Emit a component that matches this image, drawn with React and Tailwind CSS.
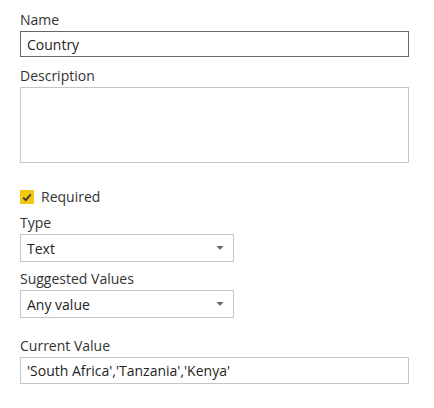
import React from "react";

function Caret() {
  return (
    <svg width="8" height="4" viewBox="0 0 8 4" className="block">
      <path d="M0.5 0 L7.5 0 L4 4 Z" fill="#6a6a6a" />
    </svg>
  );
}

export default function App() {
  return (
    <div className="w-[434px] h-[408px] bg-white pt-[10px] px-[20px] text-[14px] text-[#333333] flex flex-col font-['Open_Sans',sans-serif]">
      <div className="h-[20px] leading-[20px]">Name</div>
      <div className="mt-[1px] w-[389px] h-[26px] border border-[#666666] flex items-center px-[6px] text-[#252423]">
        Country
      </div>
      <div className="mt-[9px] h-[20px] leading-[20px]">Description</div>
      <div className="mt-[1px] w-[389px] h-[76px] border border-[#c6c6c6]"></div>
      <div className="mt-[24px] h-[20px] flex items-center gap-[7px]">
        <div className="w-[14px] h-[14px] bg-[#f2c811] flex items-center justify-center">
          <svg width="10" height="9" viewBox="0 0 10 9">
            <path d="M1.2 4.6 L3.8 7.2 L8.8 1.4" fill="none" stroke="#3a3a3a" strokeWidth="1.9" />
          </svg>
        </div>
        <span className="leading-[20px]">Required</span>
      </div>
      <div className="mt-[6px] h-[20px] leading-[20px]">Type</div>
      <div className="mt-[1px] w-[214px] h-[28px] border border-[#c6c6c6] flex items-center justify-between pl-[6px] pr-[9px] text-[#252423]">
        <span>Text</span>
        <Caret />
      </div>
      <div className="mt-[7px] h-[20px] leading-[20px]">Suggested Values</div>
      <div className="mt-[1px] w-[214px] h-[28px] border border-[#c6c6c6] flex items-center justify-between pl-[6px] pr-[9px] text-[#252423]">
        <span>Any value</span>
        <Caret />
      </div>
      <div className="mt-[18px] h-[20px] leading-[20px]">Current Value</div>
      <div className="mt-[1px] w-[389px] h-[27px] border border-[#c6c6c6] flex items-center px-[6px] text-[#252423]">
        'South Africa','Tanzania','Kenya'
      </div>
    </div>
  );
}
